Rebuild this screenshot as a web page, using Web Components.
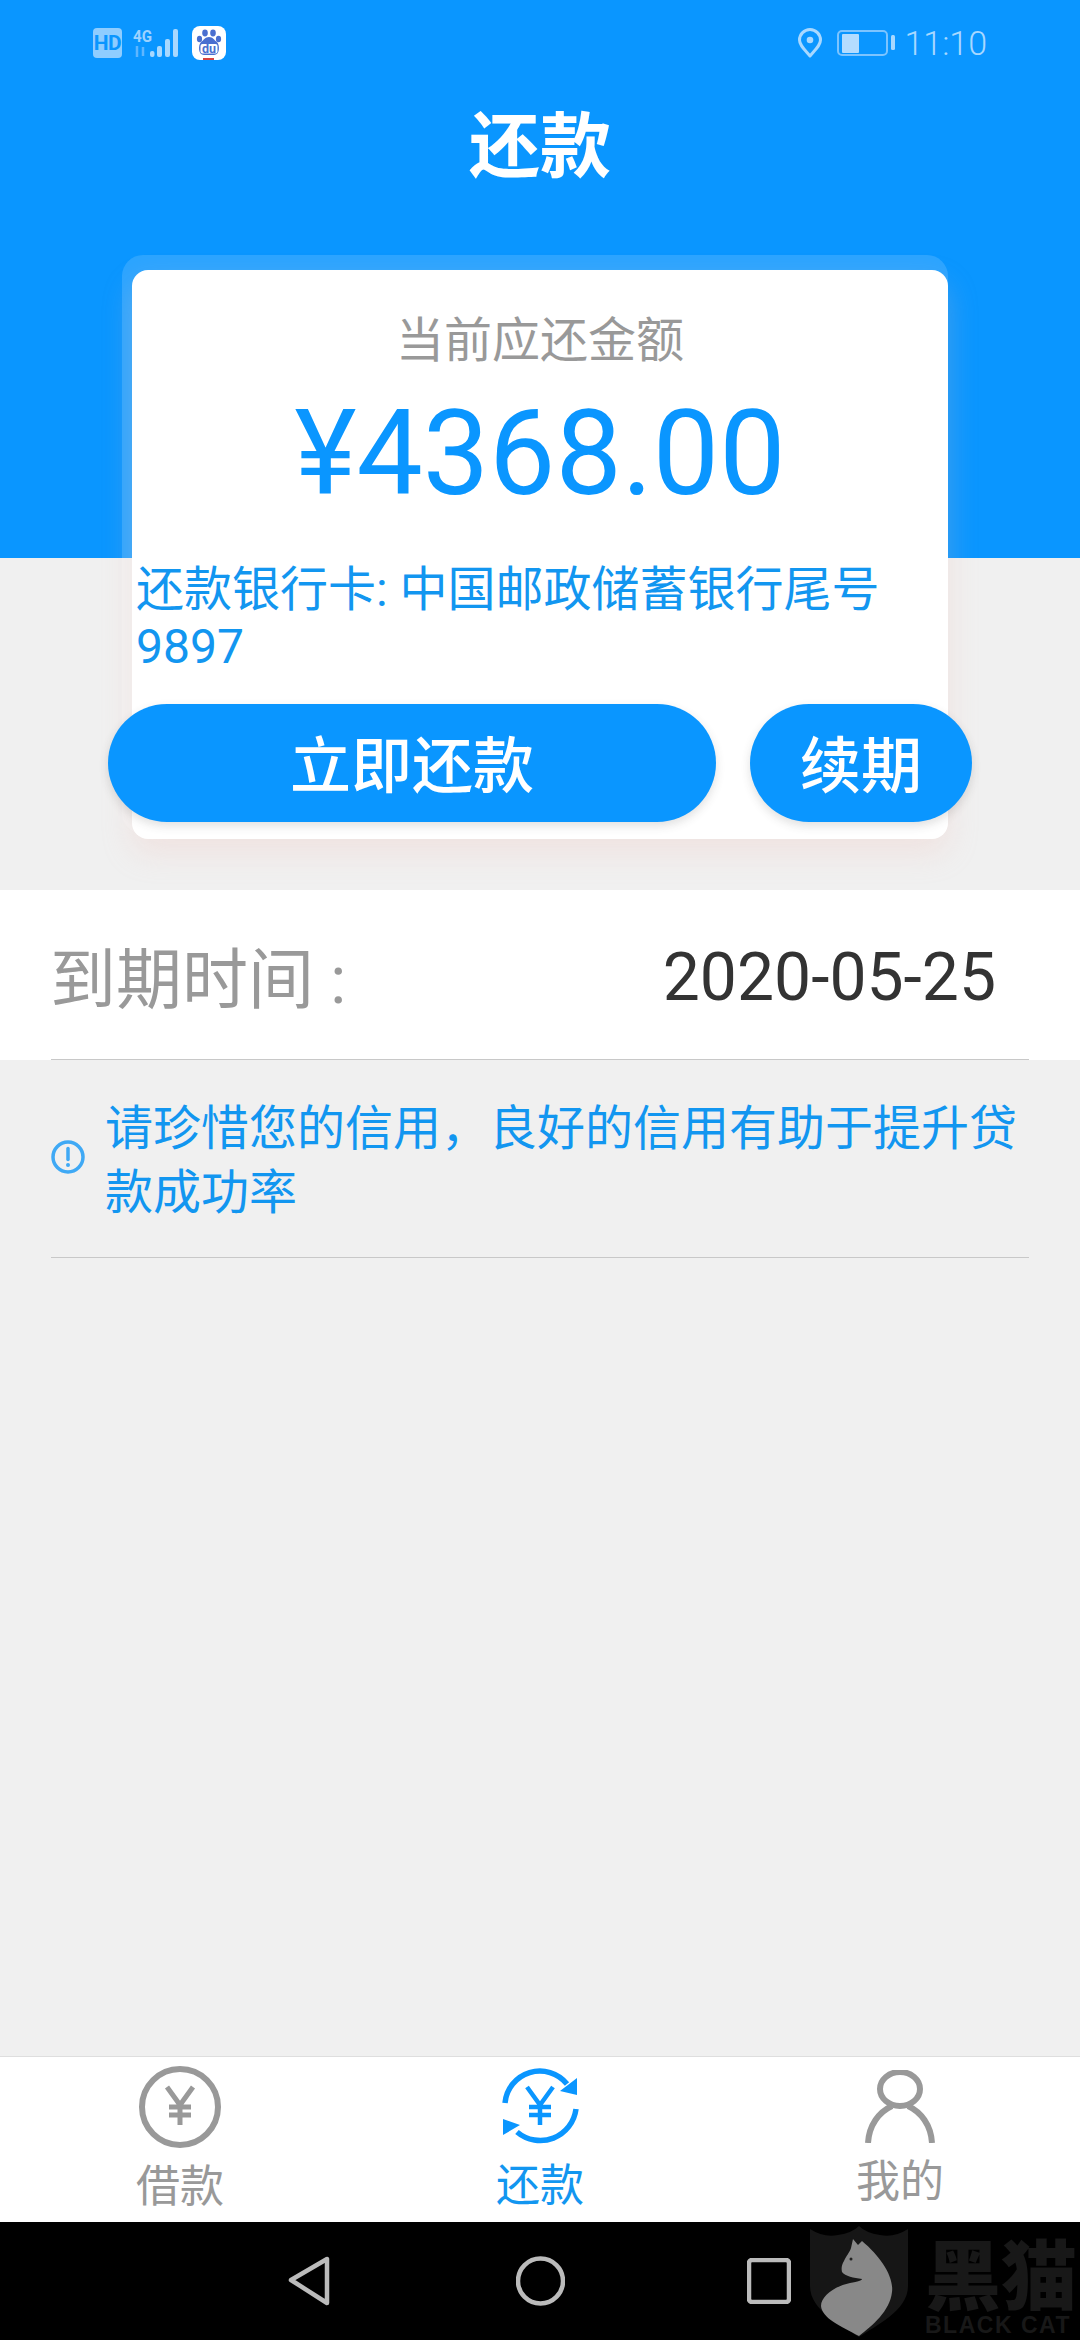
<!DOCTYPE html>
<html lang="zh-CN"><head><meta charset="utf-8"><title>还款</title>
<style>
html,body{margin:0;padding:0;background:#f0f0f0}
body{font-family:Roboto,"Noto Sans CJK SC",sans-serif;width:1080px;height:2340px;overflow:hidden}
repay-app{display:flex}
</style></head><body>
<repay-app>
  <status-bar slot="header" time="11:10"></status-bar>
  <pay-card slot="card" label="当前应还金额" amount="¥4368.00" bank="还款银行卡: 中国邮政储蓄银行尾号9897">
    <pill-button>立即还款</pill-button>
    <pill-button fixed>续期</pill-button>
  </pay-card>
  <due-row slot="content" label="到期时间 :" value="2020-05-25"></due-row>
  <tip-row slot="content">请珍惜您的信用，良好的信用有助于提升贷款成功率</tip-row>
  <tab-bar slot="tabs">
    <tab-item icon="loan" label="借款" top="9"></tab-item>
    <tab-item icon="repay" label="还款" top="10" gap="17" active></tab-item>
    <tab-item icon="me" label="我的" top="13"></tab-item>
  </tab-bar>
  <nav-bar slot="nav"></nav-bar>
</repay-app>
<script>
const def=(name,html,init)=>customElements.define(name,class extends HTMLElement{
  constructor(){super();this.attachShadow({mode:'open'}).innerHTML=html;}
  connectedCallback(){init&&init.call(this,this.shadowRoot);}
});
const FONT='Roboto,"Noto Sans CJK SC",sans-serif';

def('repay-app',`<style>
:host{display:flex;flex-direction:column;width:1080px;height:2340px;background:#f0f0f0;font-family:${FONT}}
.head{height:558px;background:#0a96ff;flex:none;display:flex;flex-direction:column}
h1{margin:0;height:72px;margin-top:49px;font-size:71px;line-height:72px;font-weight:700;color:#fff;text-align:center}
.main{flex:1;display:flex;flex-direction:column;min-height:0}
</style>
<div class="head"><slot name="header"></slot><h1>还款</h1></div>
<div class="main"><slot name="card"></slot><slot name="content"></slot></div>
<slot name="tabs"></slot><slot name="nav"></slot>`);

def('status-bar',`<style>
:host{display:flex;align-items:center;height:38px;margin-top:24px;padding:0 93px;color:#a8d8ff;flex:none}
.l,.r{display:flex;align-items:center}
.l{gap:8px}.r{margin-left:auto;gap:14px}
.hd{width:29px;height:30px;border-radius:4px;background:#8fcdff;color:#0a96ff;font:700 21px/30px Roboto,sans-serif;text-align:center;letter-spacing:-.5px}
.t{font:300 34px/38px Roboto,sans-serif;color:#a8d8ff;margin-left:-5px}
svg{display:block;flex:none}
</style>
<div class="l"><div class="hd">HD</div>
<svg width="52" height="32" viewBox="0 0 52 32" style="margin-left:3px">
<text x="0" y="15" font-family="Roboto,sans-serif" font-size="17" font-weight="700" fill="#9cd2ff" textLength="19" lengthAdjust="spacingAndGlyphs">4G</text>
<path d="M4 19v11M10 20v9" stroke="#5fb6ff" stroke-width="2.500"/>
<rect x="17" y="24" width="4.500" height="6" rx="2" fill="#a8d8ff"/><rect x="24" y="19" width="5" height="11" rx="2" fill="#a8d8ff"/><rect x="32" y="12" width="5" height="18" rx="2" fill="#a8d8ff"/><rect x="40" y="2" width="5" height="28" rx="2" fill="#a8d8ff"/>
</svg>
<svg width="34" height="34" viewBox="0 0 34 34" style="margin-left:-1px">
<rect width="34" height="34" rx="8" fill="#fff"/><rect x="11" y="32" width="11" height="2" fill="#d84040"/>
<g fill="#4a6fd0"><ellipse cx="13" cy="7" rx="2.800" ry="3.400"/><ellipse cx="21" cy="7" rx="2.800" ry="3.400"/><ellipse cx="7.500" cy="13" rx="2.600" ry="3.200"/><ellipse cx="26.500" cy="13" rx="2.600" ry="3.200"/>
<path d="M17 11c4 0 5 3 8 5 3 3 3 13-3 13H12c-6 0-6-10-3-13 3-2 4-5 8-5z"/></g>
<rect x="8.500" y="18" width="17" height="9.500" rx="2" fill="#fff"/>
<text x="17" y="27" text-anchor="middle" font-family="Roboto,sans-serif" font-size="12.500" font-weight="700" fill="#4a6fd0">du</text>
</svg></div>
<div class="r">
<svg width="26" height="30" viewBox="0 0 26 30"><path d="M13 28C7 21 2.500 17 2.500 12a10.500 10.500 0 0 1 21 0c0 5-4.500 9-10.500 16z" fill="none" stroke="#a8d8ff" stroke-width="3" stroke-linejoin="round"/><circle cx="13" cy="12" r="3.300" fill="#a8d8ff"/></svg>
<svg width="58" height="26" viewBox="0 0 58 26"><rect x="1" y="1" width="49" height="24" rx="4" fill="none" stroke="#7cc4ff" stroke-width="2"/><rect x="5" y="4" width="17" height="19" rx="1" fill="#b3dcff"/><rect x="54" y="5" width="4" height="15" rx="1.500" fill="#a8d8ff"/></svg>
<div class="t" id="t"></div></div>`,function(r){r.getElementById('t').textContent=this.getAttribute('time');});

def('pay-card',`<style>
:host{display:block;box-sizing:border-box;width:816px;height:569px;margin:-288px 0 0 132px;background:#fff;border-radius:16px;box-shadow:-5px -10px 0 5px rgba(255,255,255,.14),0 14px 30px rgba(240,190,180,.26);padding:41px 0 17px;flex:none;position:relative}
.lb{font-size:48px;line-height:60px;color:#999;text-align:center}
.am{font-size:118px;line-height:130px;color:#0a96ff;text-align:center;margin-top:18px}
.bk{font-size:48px;line-height:57px;color:#1296f0;margin:42px 0 0;padding:0 4px}
.row{display:flex;gap:34px;margin:29px -24px 0}
</style>
<div class="lb" id="l"></div><div class="am" id="a"></div><div class="bk" id="b"></div>
<div class="row"><slot></slot></div>`,function(r){
 r.getElementById('l').textContent=this.getAttribute('label');
 r.getElementById('a').textContent=this.getAttribute('amount');
 r.getElementById('b').textContent=this.getAttribute('bank');
});

def('pill-button',`<style>
:host{display:flex;flex:1;align-items:center;justify-content:center;height:118px;border-radius:59px;background:#0a96ff;color:#fff;font-size:61px;font-weight:500;box-shadow:0 4px 10px rgba(60,60,60,.16)}
.x{padding-top:7px;line-height:104px}
:host([fixed]){flex:none;width:222px}
</style><div class="x"><slot></slot></div>`);

def('due-row',`<style>
:host{display:block;margin-top:51px;background:#fff;padding:0 51px;flex:none}
.in{display:flex;align-items:center;justify-content:space-between;box-sizing:border-box;height:170px;border-bottom:1.5px solid #c8c8c8;padding:0 33px 0 0}
.k{font-size:66px;color:#999;line-height:80px;padding-top:12px;margin-left:-1px}.v{font-size:66px;color:#333;line-height:80px;padding-top:6px}
</style><div class="in"><div class="k" id="k"></div><div class="v" id="v"></div></div>`,function(r){
 r.getElementById('k').textContent=this.getAttribute('label');
 r.getElementById('v').textContent=this.getAttribute('value');
});

def('tip-row',`<style>
:host{display:block;padding:0 51px;flex:none}
.in{display:flex;align-items:center;gap:20px;padding:37px 0 32px;border-bottom:1.5px solid #c8c8c8}
svg{flex:none;display:block;margin-bottom:8px}
.t{font-size:48px;line-height:64px;color:#1296f0}
</style><div class="in"><svg width="34" height="34" viewBox="0 0 34 34"><circle cx="17" cy="17" r="15" fill="none" stroke="#3fa9f5" stroke-width="3.500"/><path d="M17 8.500v11" stroke="#3fa9f5" stroke-width="3.500" stroke-linecap="round"/><circle cx="17" cy="25" r="2" fill="#3fa9f5"/></svg><div class="t"><slot></slot></div></div>`);

def('tab-bar',`<style>
:host{display:flex;height:166px;box-sizing:border-box;background:#fff;border-top:1.5px solid #dedede;flex:none}
</style><slot></slot>`);

const yen=(cx,t,c,w)=>`<path d="M${cx-13} ${t}L${cx} ${t+18}L${cx+13} ${t}M${cx} ${t+18}V${t+38}M${cx-11} ${t+20}H${cx+11}M${cx-11} ${t+28}H${cx+11}" fill="none" stroke="${c}" stroke-width="${w}"/>`;
const ICONS={
 loan:`<svg width="84" height="82" viewBox="0 0 84 82"><circle cx="42" cy="41" r="38" fill="none" stroke="#999" stroke-width="6"/>${yen(42,21,'#999',5)}</svg>`,
 repay:`<svg width="78" height="78" viewBox="0 0 78 78"><g fill="none" stroke="#0a96ff" stroke-width="5.500"><path d="M4 36A35 35 0 0 1 66 17"/><path d="M75 42A36 36 0 0 1 16 65"/></g><path d="M76 11V28L59 24zM2 52V68L19 58z" fill="#0a96ff"/>${yen(39,20,'#0a96ff',4.500)}</svg>`,
 me:`<svg width="70" height="73" viewBox="0 0 70 73"><g fill="none" stroke="#999" stroke-width="6"><ellipse cx="35" cy="19" rx="20" ry="17"/><path d="M3 73C4 55 14 42 27 36M67 73C66 55 56 42 43 36"/></g></svg>`
};
def('tab-item',`<style>
:host{flex:1;display:flex;flex-direction:column;align-items:center;box-sizing:border-box;color:#999}
:host([active]){color:#1296f0}
.i svg{display:block}
.l{font-size:44px;line-height:48px}
</style><div class="i" id="i"></div><div class="l" id="l"></div>`,function(r){
 this.style.paddingTop=this.getAttribute('top')+'px';
 r.getElementById('i').innerHTML=ICONS[this.getAttribute('icon')];
 const l=r.getElementById('l');l.textContent=this.getAttribute('label');
 l.style.marginTop=(this.getAttribute('gap')||15)+'px';
});

def('nav-bar',`<style>
:host{display:flex;align-items:center;height:118px;background:#000;position:relative;flex:none;padding-left:288px;box-sizing:border-box;gap:186px}
svg{display:block;flex:none}
.wm{position:absolute;left:810px;top:4px}
.cn{position:absolute;left:925px;top:11px;font:900 76px/76px "Noto Sans CJK SC",sans-serif;color:#181818;white-space:nowrap}
.en{position:absolute;left:925px;top:93px;font:700 23px/20px "Liberation Sans",sans-serif;color:#181818;letter-spacing:1.500px;white-space:nowrap}
</style>
<svg width="42" height="50" viewBox="0 0 42 50"><path d="M39 3V47L3 24z" fill="none" stroke="#bbb" stroke-width="4.500" stroke-linejoin="round"/></svg>
<svg width="49" height="50" viewBox="0 0 49 50"><circle cx="24.500" cy="25" r="22.500" fill="none" stroke="#bbb" stroke-width="4.500"/></svg>
<svg width="44" height="46" viewBox="0 0 44 46" style="margin-left:-4px"><rect x="2" y="2" width="40" height="42" rx="3" fill="none" stroke="#bbb" stroke-width="4.500"/></svg>
<svg class="wm" width="98" height="111" viewBox="0 0 98 111"><path d="M0 3Q14 12 28 9Q42 7 49 0Q56 7 70 9Q84 12 98 3V60C98 85 65 100 49 111C33 100 0 85 0 60z" fill="#161616"/><path d="M43 13L48 19L52 15C70 30 84 50 82 66C80 85 62 100 49 110C30 100 12 92 11 80C11 70 25 60 40 57C48 56 52 54 52 53C44 52 35 50 32 46C31 42 32 38 34 35C36 30 40 26 41 22z" fill="#888"/><circle cx="41" cy="33" r="1.500" fill="#222"/></svg>
<div class="cn">黑猫</div><div class="en">BLACK CAT</div>`);
</script>
</body></html>
